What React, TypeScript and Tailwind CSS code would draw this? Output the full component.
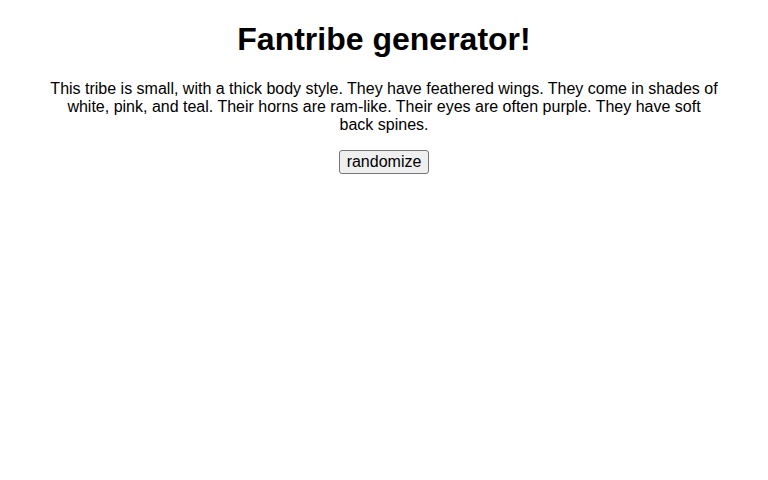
import { useState } from "react";

const sizes = ["small", "medium", "large", "huge"];
const bodies = ["thick", "slender", "lanky", "stocky"];

export default function App() {
  const [description] = useState(
    "This tribe is small, with a thick body style. They have feathered wings. They come in shades of white, pink, and teal. Their horns are ram-like. Their eyes are often purple. They have soft back spines."
  );

  function randomize() {
    // placeholder: the generator picks from these lists
    void sizes;
    void bodies;
  }

  return (
    <div className="m-2 px-[41px] text-center font-['Liberation_Sans',Arial,sans-serif] text-black">
      <h1 className="my-[21.44px] text-[32px] font-bold leading-[normal]">Fantribe generator!</h1>
      <p className="my-4 text-base leading-[normal]">{description}</p>
      <button
        type="button"
        onClick={randomize}
        className="rounded-[3px] border border-[#767676] bg-[#efefef] px-[7px] py-[2px] text-base leading-[normal] hover:bg-[#e5e5e5]"
      >
        randomize
      </button>
    </div>
  );
}
